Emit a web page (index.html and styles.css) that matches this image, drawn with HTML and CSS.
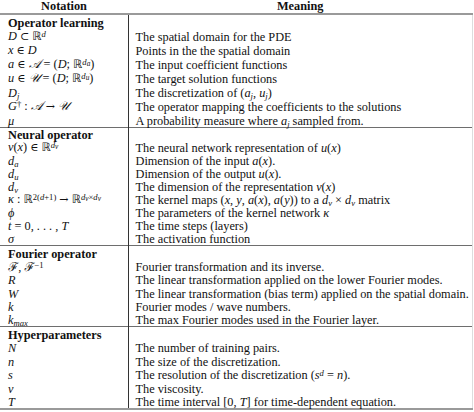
FILE: index.html
```html
<!DOCTYPE html>
<html>
<head>
<meta charset="utf-8">
<link rel="stylesheet" href="styles.css">
</head>
<body>
<table class="nt">
<colgroup><col class="c1"><col class="c2"></colgroup>
<thead>
<tr><th>Notation</th><th>Meaning</th></tr>
</thead>
<tbody class="s1">
<tr><td class="sh">Operator learning</td><td class="m"></td></tr>
<tr><td><i>D</i> <span class="op">⊂</span> <span class="bb">ℝ</span><sup><i>d</i></sup></td><td class="m">The spatial domain for the PDE</td></tr>
<tr><td><i>x</i> <span class="op">∈</span> <i>D</i></td><td class="m">Points in the the spatial domain</td></tr>
<tr><td><i>a</i> <span class="op">∈</span> <span class="cal">𝒜</span> = (<i>D</i>; <span class="bb">ℝ</span><sup><i>d<sub>a</sub></i></sup>)</td><td class="m">The input coefficient functions</td></tr>
<tr><td><i>u</i> <span class="op">∈</span> <span class="cal">𝒰</span> = (<i>D</i>; <span class="bb">ℝ</span><sup><i>d<sub>u</sub></i></sup>)</td><td class="m">The target solution functions</td></tr>
<tr><td><i>D<sub>j</sub></i></td><td class="m">The discretization of (<i>a<sub>j</sub></i>, <i>u<sub>j</sub></i>)</td></tr>
<tr><td><i>G</i><sup>†</sup> : <span class="cal">𝒜</span> <span class="op">→</span> <span class="cal">𝒰</span></td><td class="m">The operator mapping the coefficients to the solutions</td></tr>
<tr><td><i>μ</i></td><td class="m">A probability measure where <i>a<sub>j</sub></i> sampled from.</td></tr>
</tbody>
<tbody class="s2">
<tr><td class="sh">Neural operator</td><td class="m"></td></tr>
<tr><td><i>v</i>(<i>x</i>) <span class="op">∈</span> <span class="bb">ℝ</span><sup><i>d<sub>v</sub></i></sup></td><td class="m">The neural network representation of <i>u</i>(<i>x</i>)</td></tr>
<tr><td><i>d<sub>a</sub></i></td><td class="m">Dimension of the input <i>a</i>(<i>x</i>).</td></tr>
<tr><td><i>d<sub>u</sub></i></td><td class="m">Dimension of the output <i>u</i>(<i>x</i>).</td></tr>
<tr><td><i>d<sub>v</sub></i></td><td class="m">The dimension of the representation <i>v</i>(<i>x</i>)</td></tr>
<tr><td><i>κ</i> : <span class="bb">ℝ</span><sup>2(<i>d</i>+1)</sup> <span class="op">→</span> <span class="bb">ℝ</span><sup><i>d<sub>v</sub></i>×<i>d<sub>v</sub></i></sup></td><td class="m">The kernel maps (<i>x</i>, <i>y</i>, <i>a</i>(<i>x</i>), <i>a</i>(<i>y</i>)) to a <i>d<sub>v</sub></i> × <i>d<sub>v</sub></i> matrix</td></tr>
<tr><td><i>ϕ</i></td><td class="m">The parameters of the kernel network <i>κ</i></td></tr>
<tr><td><i>t</i> = 0, . . . , <i>T</i></td><td class="m">The time steps (layers)</td></tr>
<tr><td><i>σ</i></td><td class="m">The activation function</td></tr>
</tbody>
<tbody>
<tr><td class="sh">Fourier operator</td><td class="m"></td></tr>
<tr><td><span class="cal">ℱ</span>, <span class="cal">ℱ</span><sup>−1</sup></td><td class="m">Fourier transformation and its inverse.</td></tr>
<tr><td><i>R</i></td><td class="m">The linear transformation applied on the lower Fourier modes.</td></tr>
<tr><td><i>W</i></td><td class="m">The linear transformation (bias term) applied on the spatial domain.</td></tr>
<tr><td><i>k</i></td><td class="m">Fourier modes / wave numbers.</td></tr>
<tr><td><i>k<sub>max</sub></i></td><td class="m">The max Fourier modes used in the Fourier layer.</td></tr>
</tbody>
<tbody class="last">
<tr><td class="sh">Hyperparameters</td><td class="m"></td></tr>
<tr><td><i>N</i></td><td class="m">The number of training pairs.</td></tr>
<tr><td><i>n</i></td><td class="m">The size of the discretization.</td></tr>
<tr><td><i>s</i></td><td class="m">The resolution of the discretization (<i>s</i><sup><i>d</i></sup> = <i>n</i>).</td></tr>
<tr><td><i>ν</i></td><td class="m">The viscosity.</td></tr>
<tr><td><i>T</i></td><td class="m">The time interval [0, <i>T</i>] for time-dependent equation.</td></tr>
</tbody>
</table>
</body>
</html>
```

FILE: styles.css
```css
html, body {
  margin: 0;
  padding: 0;
  background: #ffffff;
}

body {
  font-family: "Liberation Serif", "DejaVu Serif", serif;
  font-size: 12.3px;
  color: #111111;
}

.nt {
  border-collapse: collapse;
  table-layout: fixed;
  width: 473px;
}

.c1 {
  width: 128px;
}

.nt th {
  font-weight: bold;
  text-align: center;
  padding: 0;
  height: 13px;
  line-height: 12px;
  vertical-align: top;
}

.nt thead tr {
  border-bottom: 2px solid #9a9a9a;
}

.nt tbody {
  border-top: 1px solid #6e6e6e;
}

.nt tbody.last {
  border-bottom: 2px solid #9a9a9a;
}

.nt td {
  padding: 0 0 0 8px;
  height: 13.3px;
  line-height: 12px;
  white-space: nowrap;
  vertical-align: bottom;
}

.nt tbody.s1 td {
  height: 14px;
}

.nt tbody.s2 td {
  height: 13.05px;
}

.nt tbody.last td {
  height: 13.5px;
}

.nt td.m {
  padding-left: 7px;
  border-left: 1px solid #333333;
  border-right: 1px solid #dddddd;
}

.nt td.sh {
  font-weight: bold;
}

.nt sup,
.nt sub {
  font-size: 0.7em;
  line-height: 0;
  position: relative;
  vertical-align: baseline;
}

.nt sup {
  top: -0.4em;
}

.nt sub {
  top: 0.22em;
}

.nt sup sub {
  font-size: 0.85em;
}

.op {
  font-family: "DejaVu Serif", serif;
  font-size: 0.9em;
}

.bb {
  font-family: "DejaVu Sans", sans-serif;
  font-size: 0.95em;
}

.cal {
  font-family: "DejaVu Serif", "Noto Sans", serif;
  font-style: italic;
}
```
